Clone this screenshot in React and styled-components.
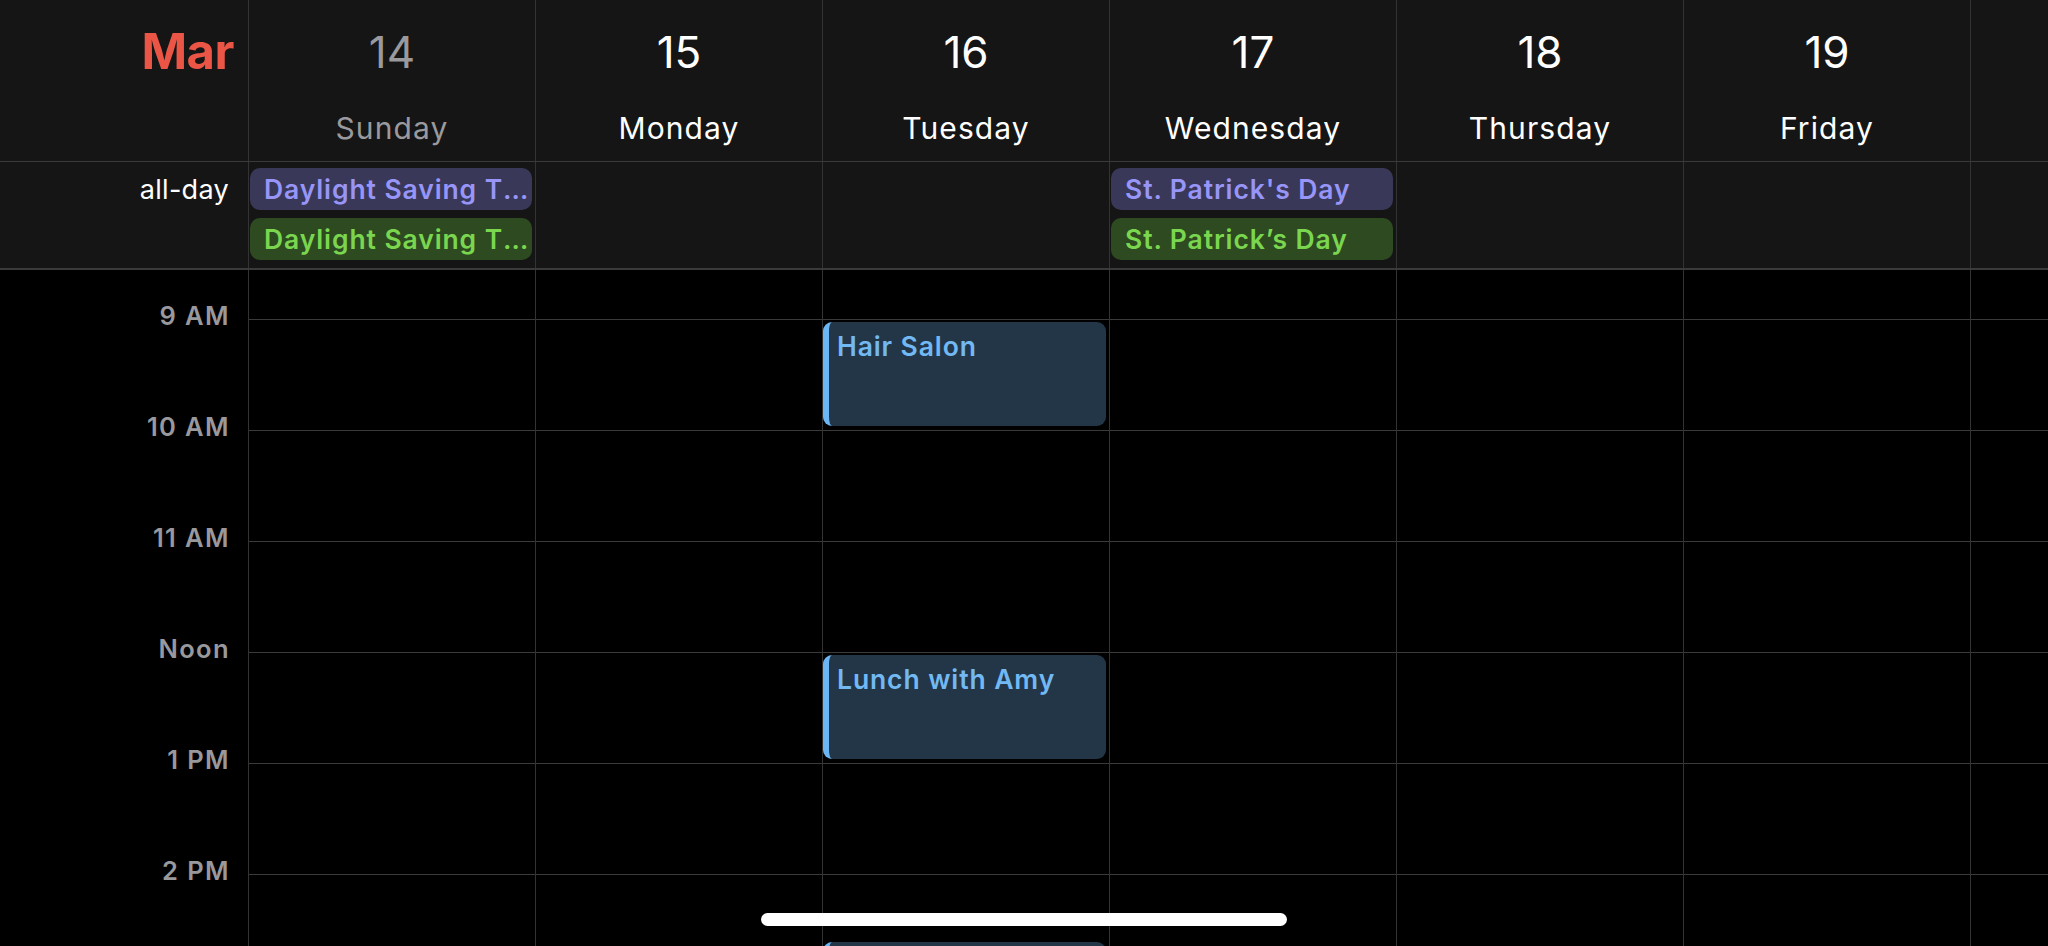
import React from "react";
import styled, { createGlobalStyle } from "styled-components";

const GUTTER = 248;
const COL = 287;
const HOUR = 111;
const TOP_GAP = 49; // space above the 9 AM line in the scrolled body
const FIRST_HOUR = 9;

const days = [
  { num: 14, name: "Sunday", muted: true },
  { num: 15, name: "Monday" },
  { num: 16, name: "Tuesday" },
  { num: 17, name: "Wednesday" },
  { num: 18, name: "Thursday" },
  { num: 19, name: "Friday" },
  { num: 20, name: "Saturday", muted: true },
];

const allDay = {
  14: [
    { title: "Daylight Saving Time", tone: "purple" },
    { title: "Daylight Saving Time", tone: "green" },
  ],
  17: [
    { title: "St. Patrick's Day", tone: "purple" },
    { title: "St. Patrick’s Day", tone: "green" },
  ],
};

const timed = {
  16: [
    { title: "Hair Salon", start: 9 * 60, end: 10 * 60 },
    { title: "Lunch with Amy", start: 12 * 60, end: 13 * 60 },
    { title: "", start: 14 * 60 + 35, end: 15 * 60 + 30 },
  ],
};

const hours = ["9 AM", "10 AM", "11 AM", "Noon", "1 PM", "2 PM", "3 PM"];

const tones = {
  purple: { bg: "#393858", fg: "#9795f7" },
  green: { bg: "#2e4a20", fg: "#7ad64f" },
};

const GlobalStyle = createGlobalStyle`
  html, body {
    margin: 0;
    padding: 0;
    background: #000;
    overflow: hidden;
  }
  body {
    font-family: Inter, "Noto Sans", "Liberation Sans", sans-serif;
    -webkit-font-smoothing: antialiased;
  }
`;

const Page = styled.div`
  width: 2048px;
  height: 946px;
  overflow: hidden;
  background: #000;
  display: flex;
  flex-direction: column;
`;

const Row = styled.div`
  display: grid;
  grid-template-columns: ${GUTTER}px repeat(7, ${COL}px);
  flex-shrink: 0;
`;

const HeaderRow = styled(Row)`
  height: 162px;
  background: #151515;
  border-bottom: 1px solid #3a3a3a;
  box-sizing: border-box;
`;

const MonthCell = styled.div`
  display: flex;
  justify-content: flex-end;
  padding: 27px 14px 0 0;
  color: #eb5545;
  font-size: 49px;
  font-weight: 700;
  line-height: 1;
  letter-spacing: -0.5px;
`;

const DayHead = styled.div`
  border-left: 1px solid #333;
  display: flex;
  flex-direction: column;
  align-items: center;
  padding-top: 30px;
  white-space: nowrap;
  color: ${(p) => (p.$muted ? "#9a9a9e" : "#fff")};
`;

const DayNum = styled.div`
  font-size: 44px;
  line-height: 1;
  font-weight: 400;
`;

const DayName = styled.div`
  margin-top: 39px;
  font-size: 30px;
  line-height: 1;
  font-weight: 400;
  letter-spacing: 1.1px;
`;

const AllDayRow = styled(Row)`
  height: 108px;
  background: #151515;
  border-bottom: 2px solid #3a3a3a;
  box-sizing: border-box;
`;

const AllDayLabel = styled.div`
  text-align: right;
  padding: 14px 19px 0 0;
  color: #fff;
  font-size: 27px;
  line-height: 1;
  letter-spacing: 0.3px;
`;

const AllDayCell = styled.div`
  border-left: 1px solid #333;
  display: flex;
  flex-direction: column;
  gap: 8px;
  padding: 6px 3px 0 1px;
  min-width: 0;
`;

const AllDayEvent = styled.div`
  height: 42px;
  line-height: 43px;
  border-radius: 10px;
  padding: 0 3px 0 14px;
  background: ${(p) => tones[p.$tone].bg};
  color: ${(p) => tones[p.$tone].fg};
  font-size: 26.5px;
  font-weight: 600;
  letter-spacing: 0.9px;
  white-space: nowrap;
  overflow: hidden;
  text-overflow: ellipsis;
`;

const Body = styled(Row)`
  flex: 1;
  overflow: hidden;
`;

const TimeGutter = styled.div`
  padding-top: ${TOP_GAP - 16}px;
  display: flex;
  flex-direction: column;
`;

const TimeLabel = styled.div`
  height: ${HOUR}px;
  flex-shrink: 0;
  text-align: right;
  padding-right: 18px;
  color: #98989d;
  font-size: 25.5px;
  font-weight: 600;
  line-height: 1;
  letter-spacing: 1.4px;
`;

const DayColumn = styled.div`
  position: relative;
  border-left: 1px solid #333;
  padding-top: ${TOP_GAP}px;
  display: flex;
  flex-direction: column;
`;

const HourCell = styled.div`
  height: ${HOUR}px;
  flex-shrink: 0;
  box-sizing: border-box;
  border-top: 1px solid #3a3a3a;
`;

const TimedEvent = styled.div`
  position: absolute;
  left: 0;
  right: 3px;
  box-sizing: border-box;
  background: #233648;
  border-left: 6px solid #6cb6f5;
  border-radius: 9px;
  padding: 9px 8px 0 8px;
  color: #72b9f4;
  font-size: 26.5px;
  font-weight: 600;
  letter-spacing: 0.9px;
  line-height: 1.2;
  overflow: hidden;
  white-space: nowrap;
`;

const HomeBar = styled.div`
  position: fixed;
  left: 50%;
  bottom: 20px;
  transform: translateX(-50%);
  width: 526px;
  height: 13px;
  border-radius: 7px;
  background: #fff;
`;

const minutesToY = (m) => TOP_GAP + ((m - FIRST_HOUR * 60) / 60) * HOUR;

export default function App() {
  return (
    <>
      <GlobalStyle />
      <Page>
        <HeaderRow>
          <MonthCell>Mar</MonthCell>
          {days.map((d) => (
            <DayHead key={d.num} $muted={d.muted}>
              <DayNum>{d.num}</DayNum>
              <DayName>{d.name}</DayName>
            </DayHead>
          ))}
        </HeaderRow>

        <AllDayRow>
          <AllDayLabel>all-day</AllDayLabel>
          {days.map((d) => (
            <AllDayCell key={d.num}>
              {(allDay[d.num] || []).map((e, i) => (
                <AllDayEvent key={i} $tone={e.tone}>
                  {e.title}
                </AllDayEvent>
              ))}
            </AllDayCell>
          ))}
        </AllDayRow>

        <Body>
          <TimeGutter>
            {hours.map((h) => (
              <TimeLabel key={h}>{h}</TimeLabel>
            ))}
          </TimeGutter>
          {days.map((d) => (
            <DayColumn key={d.num}>
              {hours.map((h) => (
                <HourCell key={h} />
              ))}
              {(timed[d.num] || []).map((e, i) => {
                const top = minutesToY(e.start) + 3;
                const height = minutesToY(e.end) - 4 - top;
                return (
                  <TimedEvent key={i} style={{ top, height }}>
                    {e.title}
                  </TimedEvent>
                );
              })}
            </DayColumn>
          ))}
        </Body>
      </Page>
      <HomeBar />
    </>
  );
}
